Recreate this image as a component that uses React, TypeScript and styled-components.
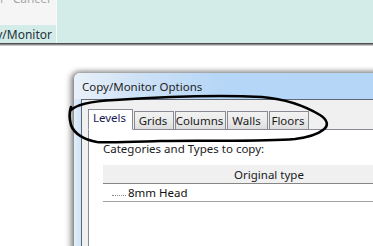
import React from "react";
import styled, { createGlobalStyle } from "styled-components";

const Global = createGlobalStyle`
  html, body { margin: 0; padding: 0; background: #ffffff; overflow: hidden; }
  #root { width: 373px; height: 246px; overflow: hidden; }
  * { box-sizing: border-box; }
`;

const Page = styled.div`
  position: relative;
  width: 373px;
  height: 246px;
  display: flex;
  flex-direction: column;
  font-family: "Noto Sans", "DejaVu Sans", sans-serif;
  font-size: 11.5px;
  color: #1a1a1a;
  overflow: hidden;
`;

const TopBar = styled.div`
  display: flex;
  height: 43px;
  background: #d4ece8;
  flex-shrink: 0;
`;

const LeftPanel = styled.div`
  width: 57px;
  display: flex;
  flex-direction: column;
  border-right: 1px solid #f4fbfa;
  overflow: hidden;
`;

const FadedTop = styled.div`
  height: 25px;
  background: #f5f5f5;
  color: #a8a8a8;
  font-size: 12px;
  line-height: 12px;
  white-space: nowrap;
  display: flex;
  justify-content: flex-end;
  padding-right: 6px;
  overflow: hidden;
  span { margin-top: -7px; }
`;

const PanelLabel = styled.div`
  flex: 1;
  background: #d4ece8;
  display: flex;
  align-items: center;
  justify-content: flex-end;
  padding-right: 4px;
  padding-top: 1px;
  white-space: nowrap;
  color: #24303c;
  font-size: 12px;
`;

const Divider = styled.div`
  height: 3px;
  flex-shrink: 0;
  border-top: 1px solid #4f4f4f;
  border-bottom: 1px solid #c8c8c8;
  background: #8a8a8a;
`;

const Desktop = styled.div`
  flex: 1;
  padding: 27px 0 0 74px;
  background: #ffffff;
  overflow: hidden;
`;

const Dialog = styled.div`
  width: 420px;
  height: 200px;
  border-radius: 6px 6px 0 0;
  background: linear-gradient(90deg, #e9f1f9 0px, #cfe2f6 60px, #b5d6f7 150px, #b3d5f6 100%);
  box-shadow: -3px 0 6px rgba(0, 0, 0, 0.45), 0 -2px 5px rgba(0, 0, 0, 0.25);
  display: flex;
  flex-direction: column;
`;

const TitleBar = styled.div`
  height: 26px;
  padding: 1px 0 0 8px;
  display: flex;
  align-items: center;
  color: #1e1e1e;
  font-size: 11.5px;
  flex-shrink: 0;
`;

const FrameBody = styled.div`
  flex: 1;
  display: flex;
  padding-left: 7px;
  background: linear-gradient(90deg, #e3eef9 0px, #cfe3f7 7px);
`;

const Client = styled.div`
  flex: 1;
  background: #f0f0f0;
  border-left: 1px solid #5d6876;
  border-top: 1px solid #5d6876;
  padding: 9px 0 0 6px;
  display: flex;
  flex-direction: column;
`;

const TabRow = styled.div`
  display: flex;
  align-items: flex-end;
  height: 20px;
  position: relative;
  z-index: 1;
`;

const Tab = styled.div<{ $active?: boolean; $w: number }>`
  width: ${(p) => p.$w}px;
  height: ${(p) => (p.$active ? 21 : 18)}px;
  margin-bottom: ${(p) => (p.$active ? -1 : 0)}px;
  margin-right: 1px;
  border: 1px solid #898c95;
  border-bottom: ${(p) => (p.$active ? "1px solid #ffffff" : "none")};
  background: ${(p) =>
    p.$active ? "#ffffff" : "linear-gradient(180deg, #f2f2f2 0%, #ebebeb 50%, #dddddd 100%)"};
  display: flex;
  align-items: center;
  justify-content: center;
  padding-bottom: ${(p) => (p.$active ? 4 : 0)}px;
  padding-right: 2px;
  color: ${(p) => (p.$active ? "#1a1a5a" : "#1a1a1a")};
  font-size: 11.5px;
  white-space: nowrap;
`;

const TabPage = styled.div`
  flex: 1;
  background: #ffffff;
  border: 1px solid #898c95;
  padding: 11px 0 0 14px;
  display: flex;
  flex-direction: column;
`;

const SectionLabel = styled.div`
  height: 16px;
  line-height: 16px;
  color: #1a1a1a;
  margin-bottom: 8px;
`;

const Table = styled.div`
  width: 332px;
  display: flex;
  flex-direction: column;
`;

const HeaderCell = styled.div`
  height: 19px;
  background: #f0f0f0;
  border-bottom: 1px solid #858585;
  display: flex;
  align-items: center;
  justify-content: center;
  padding-top: 1px;
  color: #1a1a1a;
`;

const Row = styled.div`
  height: 18px;
  border-bottom: 1px solid #a0a0a0;
  display: flex;
  align-items: center;
  padding-left: 9px;
`;

const Leader = styled.span`
  width: 14px;
  margin-right: 2px;
  margin-top: 6px;
  border-bottom: 1px dotted #8a8a8a;
`;

const RowText = styled.span`
  color: #111111;
`;

const Scribble = styled.svg`
  position: absolute;
  left: 0;
  top: 0;
  width: 373px;
  height: 246px;
  pointer-events: none;
`;

const tabs = [
  { label: "Levels", w: 45 },
  { label: "Grids", w: 40 },
  { label: "Columns", w: 51 },
  { label: "Walls", w: 41 },
  { label: "Floors", w: 40 },
];

export default function App() {
  return (
    <>
      <Global />
      <Page>
        <TopBar>
          <LeftPanel>
            <FadedTop>
              <span>n&nbsp;&nbsp;&nbsp;Cancel</span>
            </FadedTop>
            <PanelLabel>Copy/Monitor</PanelLabel>
          </LeftPanel>
        </TopBar>
        <Divider />
        <Desktop>
          <Dialog>
            <TitleBar>Copy/Monitor Options</TitleBar>
            <FrameBody>
              <Client>
                <TabRow>
                  {tabs.map((t, i) => (
                    <Tab key={t.label} $active={i === 0} $w={t.w}>
                      {t.label}
                    </Tab>
                  ))}
                </TabRow>
                <TabPage>
                  <SectionLabel>Categories and Types to copy:</SectionLabel>
                  <Table>
                    <HeaderCell>Original type</HeaderCell>
                    <Row>
                      <Leader />
                      <RowText>8mm Head</RowText>
                    </Row>
                  </Table>
                </TabPage>
              </Client>
            </FrameBody>
          </Dialog>
        </Desktop>
        <Scribble viewBox="0 0 373 246">
          <path
            d="M 70 111 C 76 104, 95 101, 115 100 C 160 97, 220 95, 262 97 C 285 99, 305 106, 320 115 C 328 120, 329 126, 323 130 C 318 134, 310 137, 295 139 C 260 142, 200 140, 160 141 C 130 142, 110 143, 97 142 C 85 140, 74 134, 71 125 C 69 118, 69 113, 71 107"
            fill="none"
            stroke="#000000"
            strokeWidth={2.6}
            strokeLinecap="round"
            strokeLinejoin="round"
          />
        </Scribble>
      </Page>
    </>
  );
}
